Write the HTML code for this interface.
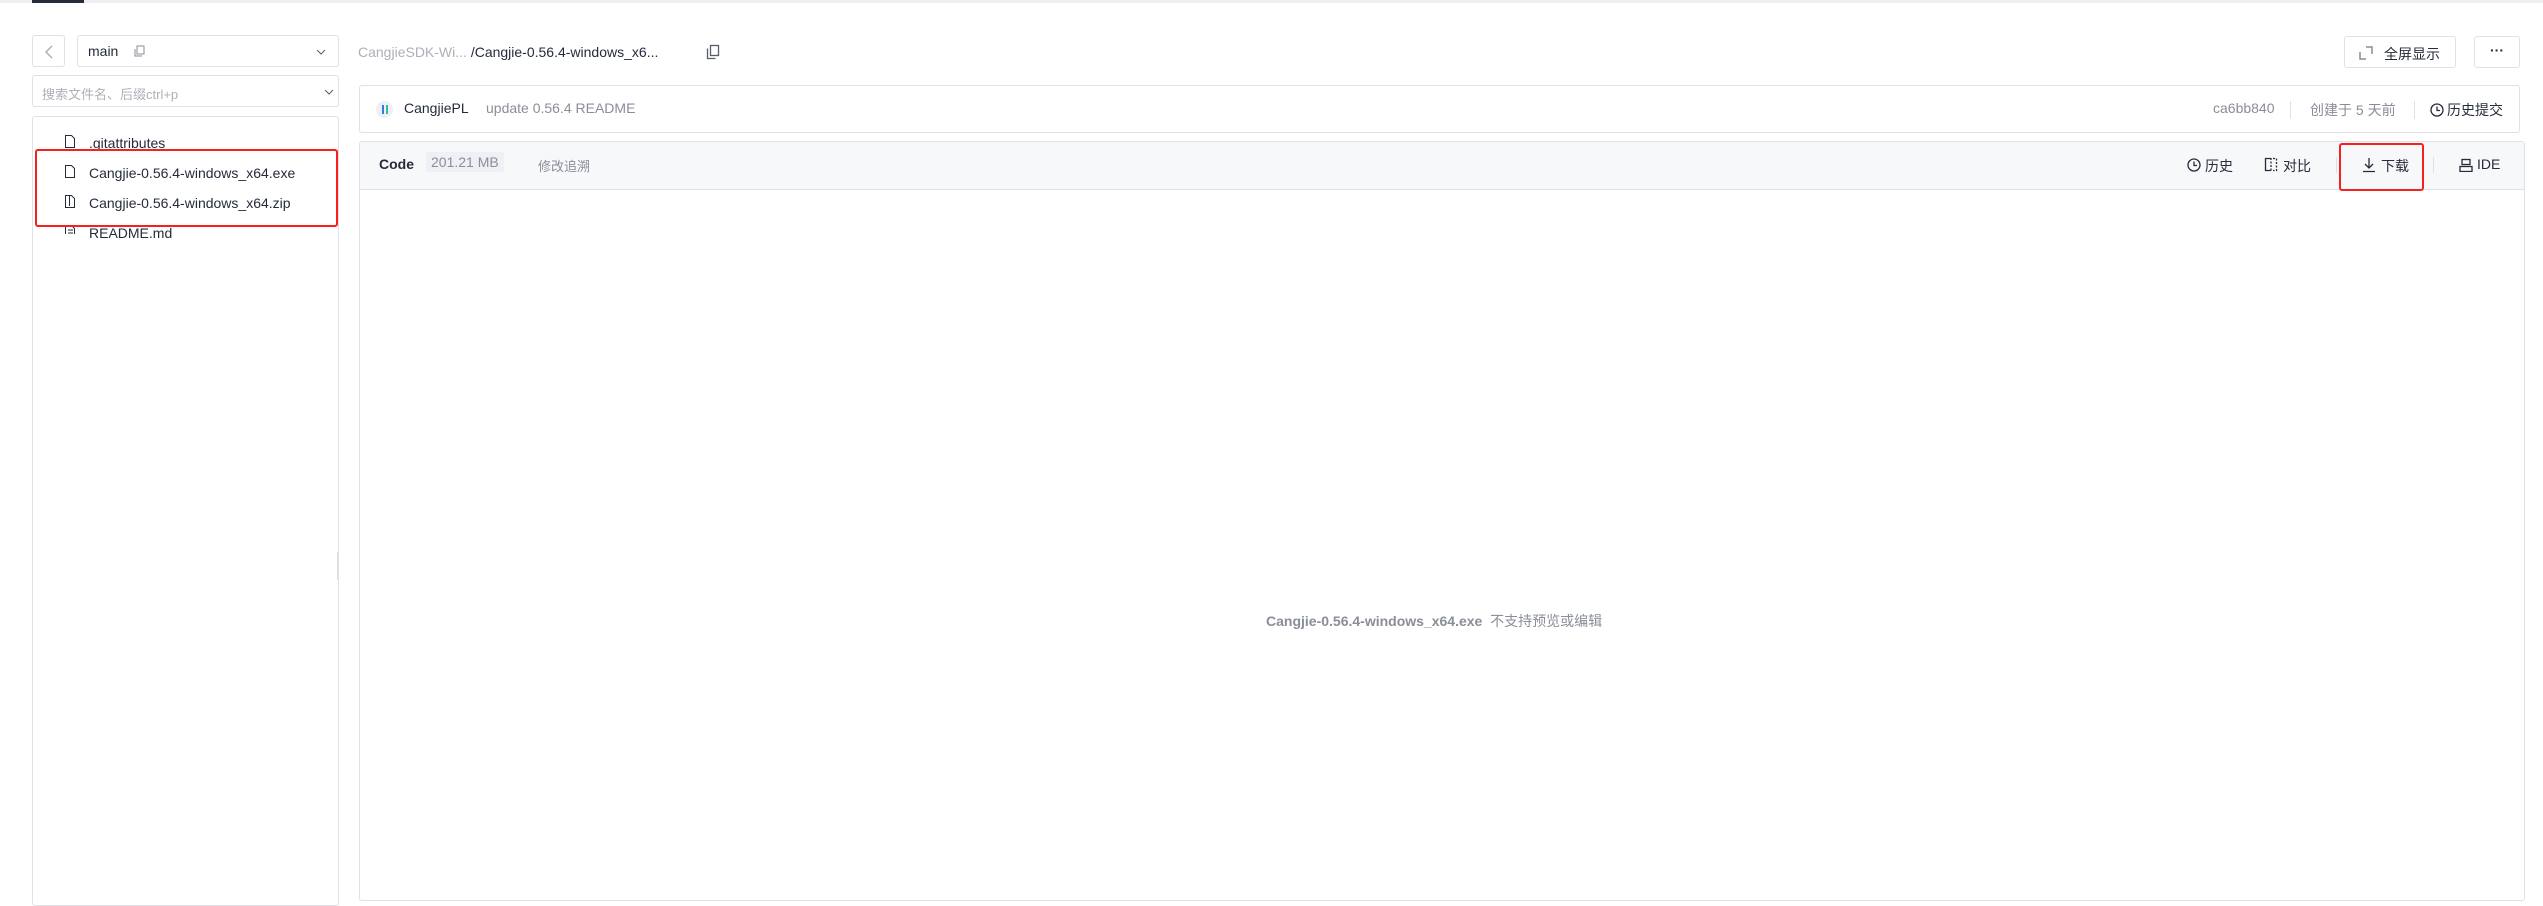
<!DOCTYPE html>
<html><head><meta charset="utf-8"><style>
*{box-sizing:border-box;margin:0;padding:0}
body{width:2543px;height:896px;background:#fff;position:relative;overflow:hidden;font-family:"Liberation Sans","Noto Sans CJK SC",sans-serif;font-size:14px;color:#252b3a}
.a{position:absolute}
.bd{border:1px solid #dfe1e6;border-radius:3px;background:#fff}
.g{color:#8a8e99}
svg{display:block}
</style></head><body>
<div class="a" style="left:0;top:0;width:2543px;height:3px;background:#eeeff3"></div>
<div class="a" style="left:32px;top:0;width:52px;height:3px;background:#252b3a"></div>

<div class="a bd" style="left:32px;top:35px;width:33px;height:32px"><svg width="33" height="32"><path d="M19 10 L13 16 L19 22" stroke="#adb0b8" stroke-width="1.5" fill="none"/></svg></div>
<div class="a bd" style="left:77px;top:35px;width:262px;height:32px"><span class="a" style="left:10px;top:7px">main</span>
<svg class="a" style="left:55px;top:9px" width="12" height="12"><rect x="4" y="1" width="7" height="8" fill="none" stroke="#8a8e99"/><path d="M2 4v7h7" fill="none" stroke="#8a8e99"/></svg>
<svg class="a" style="left:238px;top:11px" width="10" height="10"><path d="M1 3l4 4 4-4" stroke="#575d6c" fill="none"/></svg></div>
<div class="a bd" style="left:32px;top:75px;width:307px;height:32px"><span class="a g" style="left:9px;top:8px;font-size:13px;color:#adb0b8">搜索文件名、后缀ctrl+p</span>
<svg class="a" style="left:291px;top:11px" width="10" height="10"><path d="M1 3l4 4 4-4" stroke="#575d6c" fill="none"/></svg></div>
<div class="a" style="left:32px;top:116px;width:307px;height:790px;border:1px solid #dfe1e6;border-radius:3px"></div>
<div class="a" style="left:337px;top:552px;width:2px;height:28px;background:#dfe1e6"></div>

<svg class="a" style="left:64px;top:134px" width="12" height="100"><g fill="none" stroke="#252b3a" stroke-width="1"><path d="M1.5 1.5h6l3 3v9h-9z"/><path d="M1.5 31.5h6l3 3v9h-9z"/><path d="M1.5 61.5h6l3 3v9h-9z"/><path d="M5.5 62v10"/><path d="M1.5 91.5h6l3 3v9h-9z"/><path d="M4 96h5M4 99h5M4 102h5"/></g></svg>
<div class="a" style="left:89px;top:133px;line-height:20px">.gitattributes</div>
<div class="a" style="left:89px;top:163px;line-height:20px">Cangjie-0.56.4-windows_x64.exe</div>
<div class="a" style="left:89px;top:193px;line-height:20px">Cangjie-0.56.4-windows_x64.zip</div>
<div class="a" style="left:89px;top:223px;line-height:20px">README.md</div>
<div class="a" style="left:35px;top:149px;width:303px;height:78px;border:2px solid #f52020;border-radius:3px"></div>

<div class="a" style="left:358px;top:42px;line-height:20px"><span style="color:#adb0b8">CangjieSDK-Wi...</span> <span>/Cangjie-0.56.4-windows_x6...</span></div>
<svg class="a" style="left:706px;top:44px" width="14" height="16"><rect x="4.5" y="1.5" width="8" height="10" fill="none" stroke="#575d6c" stroke-width="1.3"/><path d="M1.5 4.5v10h8" fill="none" stroke="#575d6c" stroke-width="1.3"/></svg>

<div class="a bd" style="left:2344px;top:36px;width:112px;height:32px"><svg class="a" style="left:14px;top:9px" width="14" height="14"><path d="M1 6v7h6M13 8V1H7" stroke="#8a8e99" stroke-width="1.5" fill="none"/></svg><span class="a" style="left:39px;top:7px">全屏显示</span></div>
<div class="a bd" style="left:2474px;top:36px;width:46px;height:32px;text-align:center;line-height:26px;font-weight:bold">···</div>

<div class="a bd" style="left:359px;top:85px;width:2161px;height:48px">
<div class="a" style="left:16px;top:15px;width:17px;height:17px;border-radius:50%;background:#eef0f5"></div>
<div class="a" style="left:22px;top:19px;width:2px;height:9px;background:#2f7be8"></div><div class="a" style="left:26px;top:19px;width:2px;height:9px;background:#2ac3a0"></div>
<span class="a" style="left:44px;top:14px">CangjiePL</span><span class="a g" style="left:126px;top:14px">update 0.56.4 README</span>
<span class="a g" style="left:1853px;top:14px">ca6bb840</span>
<div class="a" style="left:1930px;top:15px;width:1px;height:18px;background:#dfe1e6"></div>
<span class="a g" style="left:1950px;top:14px">创建于 5 天前</span>
<div class="a" style="left:2054px;top:15px;width:1px;height:18px;background:#dfe1e6"></div>
<svg class="a" style="left:2070px;top:17px" width="14" height="14"><circle cx="7" cy="7" r="6" fill="none" stroke="#252b3a" stroke-width="1.3"/><path d="M7 3.5V7.5h3" fill="none" stroke="#252b3a" stroke-width="1.3"/></svg>
<span class="a" style="left:2087px;top:14px">历史提交</span>
</div>

<div class="a" style="left:359px;top:141px;width:2166px;height:760px;border:1px solid #dfe1e6;border-radius:3px"></div>
<div class="a" style="left:360px;top:142px;width:2164px;height:48px;background:#f7f8fa;border-bottom:1px solid #dfe1e6"></div>
<span class="a" style="left:379px;top:156px;font-weight:bold">Code</span>
<span class="a g" style="left:426px;top:152px;background:#eef0f5;padding:2px 5px;border-radius:2px">201.21 MB</span>
<span class="a g" style="left:538px;top:156px;font-size:13px">修改追溯</span>
<svg class="a" style="left:2187px;top:158px" width="14" height="14"><circle cx="7" cy="7" r="6" fill="none" stroke="#252b3a" stroke-width="1.3"/><path d="M7 3.5V7.5h3" fill="none" stroke="#252b3a" stroke-width="1.3"/></svg>
<span class="a" style="left:2205px;top:156px">历史</span>
<svg class="a" style="left:2264px;top:157px" width="14" height="16"><path d="M7 1.5H1.5v12H7" fill="none" stroke="#252b3a" stroke-width="1.3"/><path d="M7 1v14M9 1.5h3.5v12H9" fill="none" stroke="#252b3a" stroke-width="1.3" stroke-dasharray="2 1.5"/></svg>
<span class="a" style="left:2283px;top:156px">对比</span>
<div class="a" style="left:2336px;top:157px;width:1px;height:16px;background:#dfe1e6"></div>
<svg class="a" style="left:2362px;top:157px" width="14" height="16"><path d="M7 1v10M3 7l4 4 4-4M1 14.5h12" fill="none" stroke="#252b3a" stroke-width="1.3"/></svg>
<span class="a" style="left:2381px;top:156px">下载</span>
<div class="a" style="left:2339px;top:143px;width:85px;height:48px;border:2px solid #f52020;border-radius:3px"></div>
<div class="a" style="left:2433px;top:157px;width:1px;height:16px;background:#dfe1e6"></div>
<svg class="a" style="left:2459px;top:158px" width="14" height="14"><rect x="3" y="1.5" width="8" height="5" fill="none" stroke="#252b3a" stroke-width="1.3"/><rect x="1" y="8.5" width="12" height="5" fill="none" stroke="#252b3a" stroke-width="1.3"/></svg>
<span class="a" style="left:2477px;top:156px">IDE</span>

<div class="a" style="left:1266px;top:611px;line-height:20px;color:#8a8e99"><b>Cangjie-0.56.4-windows_x64.exe</b>&nbsp; <span style="font-size:14px">不支持预览或编辑</span></div>
</body></html>
